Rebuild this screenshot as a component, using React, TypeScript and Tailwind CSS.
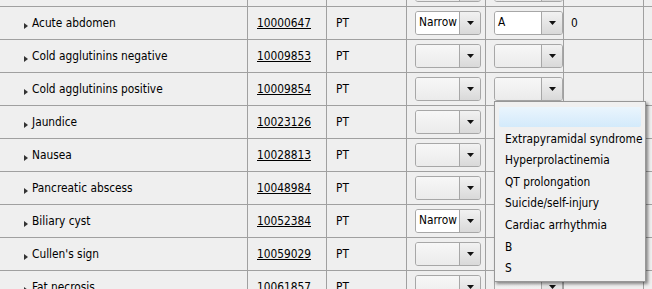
import React from "react";

type Row = { name: string; code: string; c4: string | null; c5: string | null; c6?: string; hideText?: boolean };

const rows: Row[] = [
  { name: "", code: "", c4: "", c5: "", hideText: true },
  { name: "Acute abdomen", code: "10000647", c4: "Narrow", c5: "A", c6: "0" },
  { name: "Cold agglutinins negative", code: "10009853", c4: "", c5: "" },
  { name: "Cold agglutinins positive", code: "10009854", c4: "", c5: "" },
  { name: "Jaundice", code: "10023126", c4: "", c5: "" },
  { name: "Nausea", code: "10028813", c4: "", c5: "" },
  { name: "Pancreatic abscess", code: "10048984", c4: "", c5: "" },
  { name: "Biliary cyst", code: "10052384", c4: "Narrow", c5: "" },
  { name: "Cullen's sign", code: "10059029", c4: "", c5: "" },
  { name: "Fat necrosis", code: "10061857", c4: "", c5: "" },
];

const items = [
  "",
  "Extrapyramidal syndrome",
  "Hyperprolactinemia",
  "QT prolongation",
  "Suicide/self-injury",
  "Cardiac arrhythmia",
  "B",
  "S",
];

function Combo({ value, width }: { value: string; width: string }) {
  const filled = value !== "";
  return (
    <div className={`${width} h-[24px] flex border border-[#a7a7a7] rounded-[3px] overflow-hidden -mt-[1px]`}>
      <div
        className={`flex-1 flex items-center pl-[3px] text-black whitespace-nowrap overflow-hidden ${
          filled ? "bg-white" : "bg-gradient-to-b from-[#f7f7f7] to-[#ebebeb]"
        }`}
      >
        {value}
      </div>
      <div className="w-[21px] border-l border-[#a7a7a7] bg-gradient-to-b from-[#f2f2f2] to-[#d9d9d9] flex items-center justify-center">
        <svg width="7" height="4" viewBox="0 0 7 4">
          <polygon points="0,0 7,0 3.5,4" fill="#111" />
        </svg>
      </div>
    </div>
  );
}

export default function App() {
  return (
    <div
      className="relative w-[652px] h-[289px] overflow-hidden bg-[#efefef] text-[11.8px] text-black"
      style={{ fontFamily: '"DejaVu Sans Condensed", "Liberation Sans", sans-serif' }}
    >
      <div className="-mt-[26px] flex flex-col">
        {rows.map((r, i) => (
          <div key={i} className="flex h-[33px] border-b border-[#a0a0a0]">
            <div className="w-[248px] shrink-0 border-r border-[#a0a0a0] flex items-center pl-[24px] whitespace-nowrap">
              {!r.hideText && (
                <>
                  <svg width="4" height="6" viewBox="0 0 4 6" className="mt-[6px] mr-[4px]">
                    <polygon points="0,0 4,3 0,6" fill="#333" />
                  </svg>
                  <span className="translate-y-[1px]">{r.name}</span>
                </>
              )}
            </div>
            <div className="w-[79px] shrink-0 border-r border-[#a0a0a0] flex items-center pl-[9px]">
              <span className="underline translate-y-[1px]">{r.code}</span>
            </div>
            <div className="w-[80px] shrink-0 border-r border-[#a0a0a0] flex items-center pl-[9px]">
              {!r.hideText && <span className="translate-y-[1px]">PT</span>}
            </div>
            <div className="w-[79px] shrink-0 border-r border-[#a0a0a0] flex items-center pl-[8px]">
              {r.c4 !== null && <Combo value={r.c4} width="w-[66px]" />}
            </div>
            <div className="w-[78px] shrink-0 border-r border-[#a0a0a0] flex items-center pl-[8px]">
              {r.c5 !== null && <Combo value={r.c5} width="w-[69px]" />}
            </div>
            <div className="w-[80px] shrink-0 border-r border-[#a0a0a0] flex items-center pl-[7px]">
              {r.c6 && <span className="translate-y-[1px]">{r.c6}</span>}
            </div>
            <div className="flex-1" />
          </div>
        ))}
      </div>

      <div className="absolute left-[494px] top-[101px] w-[152px] h-[181px] bg-[#f0f0f0] border border-[#979797] shadow-[2px_2px_3px_rgba(0,0,0,0.45)] pt-[5px] px-[4px]">
        {items.map((t, i) => (
          <div
            key={i}
            className={`flex items-center pl-[6px] whitespace-nowrap ${
              i === 0
                ? "rounded-[2px] bg-gradient-to-b from-[#eaf5fd] to-[#d3eafb] h-[20px] mb-[1.6px]"
                : "h-[21.6px]"
            }`}
          >
            {t}
          </div>
        ))}
      </div>
    </div>
  );
}
